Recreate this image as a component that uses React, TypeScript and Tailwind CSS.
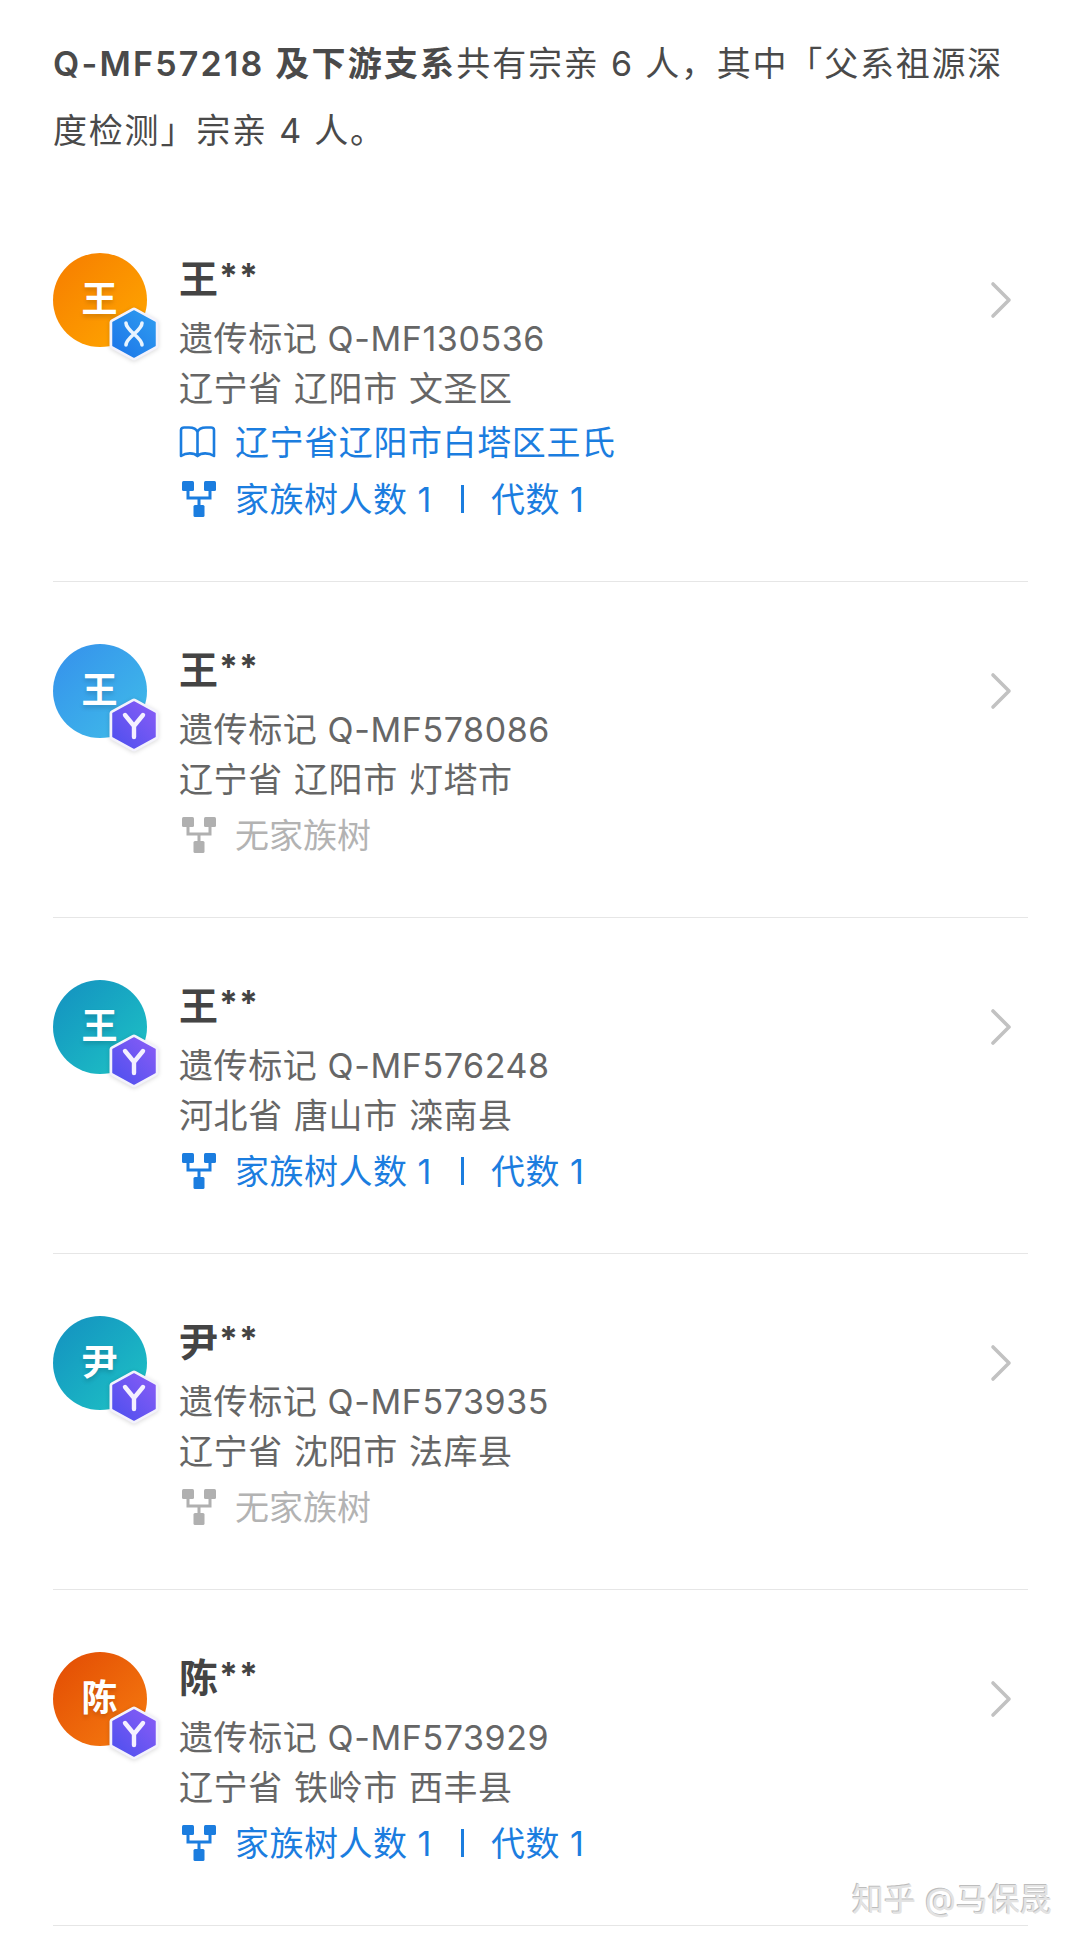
const cjk = "font-['Inter','Noto_Sans_CJK_SC',sans-serif]";

type Person = {
  name: string;
  marker: string;
  place: string;
  badge: 'X' | 'Y';
  avatar: string;
  book?: string;
  tree: boolean;
};

const people: Person[] = [
  { name: '王', marker: 'Q-MF130536', place: '辽宁省 辽阳市 文圣区', badge: 'X', avatar: 'from-[#f67c00] to-[#ffa800]', book: '辽宁省辽阳市白塔区王氏', tree: true },
  { name: '王', marker: 'Q-MF578086', place: '辽宁省 辽阳市 灯塔市', badge: 'Y', avatar: 'from-[#3690ec] to-[#41bde8]', tree: false },
  { name: '王', marker: 'Q-MF576248', place: '河北省 唐山市 滦南县', badge: 'Y', avatar: 'from-[#1590c0] to-[#20c4c4]', tree: true },
  { name: '尹', marker: 'Q-MF573935', place: '辽宁省 沈阳市 法库县', badge: 'Y', avatar: 'from-[#1590c0] to-[#20c4c4]', tree: false },
  { name: '陈', marker: 'Q-MF573929', place: '辽宁省 铁岭市 西丰县', badge: 'Y', avatar: 'from-[#e24a04] to-[#f67c10]', tree: true },
];

const hex = 'M25 5 L46 16.500 V39.500 L25 51 L4 39.500 V16.500 Z';

function Badge({ type }: { type: 'X' | 'Y' }) {
  const id = 'hex' + type;
  return (
    <svg width="50" height="56" viewBox="0 0 50 56" className="absolute top-[53px] left-[56px] drop-shadow-sm">
      <defs>
        <linearGradient id={id} x1="0" y1="1" x2="1" y2="0">
          <stop offset="0" stopColor={type === 'X' ? '#1c74e8' : '#4c50ee'} />
          <stop offset="1" stopColor={type === 'X' ? '#2f9df0' : '#8a5cf6'} />
        </linearGradient>
      </defs>
      <path d={hex} fill="#f3f2fc" stroke="#f3f2fc" strokeWidth="7" strokeLinejoin="round" />
      <path d={hex} fill={`url(#${id})`} stroke={`url(#${id})`} strokeWidth="1.5" strokeLinejoin="round" />
      {type === 'X' ? (
        <path d="M17 17 C17 25 33 31 33 39 M33 17 C33 25 17 31 17 39" fill="none" stroke="#e8f4ff" strokeWidth="3.6" strokeLinecap="round" />
      ) : (
        <path d="M16 18 L25 29 L34 18 M25 29 V40" fill="none" stroke="#f4f0ff" strokeWidth="4.4" strokeLinecap="round" strokeLinejoin="round" />
      )}
    </svg>
  );
}

function TreeIcon({ color }: { color: string }) {
  return (
    <svg width="36" height="36" viewBox="0 0 36 36" className="shrink-0">
      <path d="M7 8 V17 H29 V8 M18 17 V26" fill="none" stroke={color} strokeWidth="3" />
      <rect x="1" y="0" width="12" height="10" rx="1.5" fill={color} />
      <rect x="23" y="0" width="12" height="10" rx="1.5" fill={color} />
      <rect x="12.500" y="24" width="11" height="12" rx="1.5" fill={color} />
    </svg>
  );
}

function BookIcon() {
  return (
    <svg width="37" height="32" viewBox="0 0 37 32" className="shrink-0">
      <path d="M18.5 6 C17 2 14 1.500 10 1.500 H5 C3.500 1.500 2 2.200 2 4 V30 C7 26.500 15 26.500 18.5 30 C22 26.500 30 26.500 35 30 V4 C35 2.200 33.500 1.500 32 1.500 H27 C23 1.500 20 2 18.5 6 Z M18.5 6 V30" fill="none" stroke="#1b7ddf" strokeWidth="2.6" strokeLinejoin="round" />
    </svg>
  );
}

function Row({ p }: { p: Person }) {
  return (
    <div className="flex items-start border-b border-[#e6e6e6] pt-[62px] pb-[54px]">
      <div className="relative w-[126px] shrink-0">
        <div className={`flex h-[94px] w-[94px] items-center justify-center rounded-full bg-gradient-to-br text-[36px] font-semibold text-white ${p.avatar}`}>
          <span className="-mt-[3px] -ml-[1px] [text-shadow:0_3px_4px_rgba(0,0,0,0.15)]">{p.name}</span>
        </div>
        <Badge type={p.badge} />
      </div>
      <div className="flex-1 pt-[4px]">
        <div className="flex h-[44px] items-center text-[#444]">
          <span className="text-[39px] leading-[44px] font-bold">{p.name}</span>
          <span className="ml-[1px] -mt-[7px] text-[34px] leading-[30px] font-bold tracking-[1px]">**</span>
        </div>
        <div className="mt-[12px] h-[52px] text-[34px] leading-[52px] tracking-[0.6px] text-[#666]">遗传标记 {p.marker}</div>
        <div className="h-[48px] text-[34px] leading-[48px] tracking-[0.6px] text-[#666] [word-spacing:1px]">{p.place}</div>
        {p.book && (
          <div className="mt-[1px] flex h-[56px] items-center text-[#1b7ddf]">
            <span className="w-[56px]"><BookIcon /></span>
            <span className="text-[34px] tracking-[0.6px]">{p.book}</span>
          </div>
        )}
        <div className={`${p.book ? 'mt-[1px]' : 'mt-[3px]'} flex h-[56px] items-center`}>
          <span className="ml-[2px] w-[54px]"><TreeIcon color={p.tree ? '#1b7ddf' : '#b0b0b0'} /></span>
          {p.tree ? (
            <span className="flex items-center text-[34px] tracking-[0.5px] text-[#1b7ddf]">
              家族树人数 1
              <span className="mr-[27px] ml-[29px] h-[28px] w-[3px] bg-[#1b7ddf]" />
              代数 1
            </span>
          ) : (
            <span className="text-[34px] text-[#b3b3b3]">无家族树</span>
          )}
        </div>
      </div>
      <svg width="24" height="40" viewBox="0 0 24 40" className="mt-[27px] mr-[15px] shrink-0">
        <path d="M4 4 L20 20 L4 36" fill="none" stroke="#c2c2c2" strokeWidth="3.6" strokeLinecap="round" strokeLinejoin="round" />
      </svg>
    </div>
  );
}

export default function App() {
  return (
    <div className={`relative h-[1945px] overflow-hidden bg-white pr-[51px] pl-[53px] ${cjk}`}>
      <p className="pt-[30px] text-[34px] leading-[67px] tracking-[1.8px] text-[#4a4a4a]">
        <span className="font-semibold tracking-[2.2px]">Q-MF57218 及下游支系</span>共有宗亲 6 人，其中「父系祖源深度检测」宗亲 4 人。
      </p>
      <div className="mt-[27px]">
        {people.map((p, i) => (
          <Row key={i} p={p} />
        ))}
      </div>
      <div className="absolute top-[1878px] left-[852px] text-[32px] leading-[44px] text-[#e3e3e3] [text-shadow:-1px_-1px_0_#bdbdbd]">
        知乎 @马保晟
      </div>
    </div>
  );
}
